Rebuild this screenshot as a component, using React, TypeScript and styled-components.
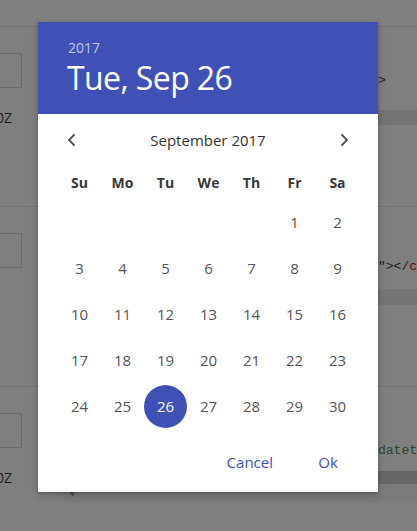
import React from "react";
import styled, { createGlobalStyle } from "styled-components";

const Global = createGlobalStyle`
  html, body { margin: 0; padding: 0; width: 417px; height: 531px; overflow: hidden; background: #fff; }
  #root { width: 417px; height: 531px; }
  * { box-sizing: border-box; }
`;

/* ---------- background page ---------- */

const Page = styled.div`
  position: relative;
  width: 417px;
  height: 531px;
  overflow: hidden;
  background: #fff;
  font-family: "Open Sans", "Noto Sans", sans-serif;
`;

const TopStrip = styled.div`
  height: 27px;
  border-bottom: 1px solid #e4e4e4;
`;

const Section = styled.section<{ $h: number }>`
  display: grid;
  grid-template-columns: 63px 1fr;
  height: ${(p) => p.$h}px;
  border-bottom: 1px solid #e4e4e4;
`;

const LeftCol = styled.div`
  display: flex;
  flex-direction: column;
  align-items: flex-end;
  padding-right: 41px;
  padding-top: 26px;
`;

const InputBox = styled.div`
  width: 160px;
  height: 35px;
  flex: none;
  border: 1px solid #d6d6d6;
  background: #fff;
`;

const Caption = styled.div`
  margin-top: 20px;
  margin-right: 10px;
  white-space: nowrap;
  font-size: 14px;
  line-height: 20px;
  color: #3e3e3e;
`;

const CodeCol = styled.div<{ $top: number }>`
  display: flex;
  flex-direction: column;
  padding-top: ${(p) => p.$top}px;
`;

const CodeLine = styled.div`
  padding-left: 315px;
  font-family: "Liberation Mono", monospace;
  font-size: 13px;
  line-height: 18px;
  white-space: nowrap;
  color: #444;
`;

const Tok = styled.span<{ $c: string }>`
  color: ${(p) => p.$c};
`;

const ScrollBand = styled.div<{ $gap: number; $h: number }>`
  margin-top: ${(p) => p.$gap}px;
  height: ${(p) => p.$h}px;
  background: #eaeaea;
`;

const Thumb = styled.div`
  margin-top: 11px;
  margin-left: 17px;
  height: 13px;
  background: #cdcdcd;
`;

const Track = styled.div`
  height: 18px;
  background: #f6f6f6;
  display: flex;
  align-items: center;
  padding-left: 6px;
`;

/* ---------- overlay & dialog ---------- */

const Backdrop = styled.div`
  position: absolute;
  inset: 0;
  background: rgba(0, 0, 0, 0.5);
  display: flex;
  justify-content: flex-start;
  align-items: flex-start;
  padding: 22px 0 0 38px;
`;

const Dialog = styled.div`
  width: 340px;
  background: #fff;
  box-shadow: 0 3px 8px rgba(0, 0, 0, 0.2), 0 1px 3px rgba(0, 0, 0, 0.18);
  font-family: "Open Sans", "Noto Sans", sans-serif;
  display: flex;
  flex-direction: column;
`;

const Header = styled.header`
  height: 92px;
  background: #3f51b5;
  padding: 16px 30px 0;
  display: flex;
  flex-direction: column;
`;

const Year = styled.div`
  font-size: 14px;
  line-height: 20px;
  color: rgba(255, 255, 255, 0.7);
`;

const DateTitle = styled.div`
  font-size: 32px;
  line-height: 40px;
  color: #fff;
  letter-spacing: -0.6px;
  margin-left: -1px;
`;

const NavRow = styled.div`
  height: 52px;
  padding: 0 14px;
  display: flex;
  align-items: center;
  justify-content: space-between;
`;

const NavButton = styled.button`
  width: 40px;
  height: 40px;
  border: 0;
  background: transparent;
  padding: 0;
  display: flex;
  align-items: center;
  justify-content: center;
  cursor: pointer;
`;

const MonthTitle = styled.div`
  font-size: 15px;
  line-height: 20px;
  color: #333;
`;

const Grid = styled.div`
  padding: 0 20px;
  display: grid;
  grid-template-columns: repeat(7, 1fr);
`;

const WeekDay = styled.div`
  height: 33px;
  display: flex;
  align-items: center;
  justify-content: center;
  font-size: 14px;
  font-weight: 700;
  color: #383838;
`;

const Cell = styled.div`
  height: 46px;
  display: flex;
  align-items: center;
  justify-content: center;
`;

const Day = styled.button<{ $selected?: boolean }>`
  width: 43px;
  height: 43px;
  border: 0;
  border-radius: 50%;
  padding: 0;
  font-family: inherit;
  font-size: 15px;
  color: ${(p) => (p.$selected ? "#fff" : "#555")};
  background: ${(p) => (p.$selected ? "#3f51b5" : "transparent")};
  cursor: pointer;
`;

const Actions = styled.div`
  display: flex;
  justify-content: flex-end;
  gap: 7px;
  padding: 15px 18px 12px;
`;

const TextButton = styled.button`
  min-width: 64px;
  height: 36px;
  padding: 0 16px;
  border: 0;
  background: transparent;
  font-family: inherit;
  font-size: 15px;
  color: #3f51b5;
  cursor: pointer;
`;

const Chevron = ({ dir }: { dir: "left" | "right" }) => (
  <svg width="10" height="14" viewBox="0 0 10 14" fill="none">
    <path
      d={dir === "left" ? "M7.5 1.5 L2 7 L7.5 12.5" : "M2.5 1.5 L8 7 L2.5 12.5"}
      stroke="#4a4a4a"
      strokeWidth="1.8"
    />
  </svg>
);

const LeftArrow = () => (
  <svg width="5" height="8" viewBox="0 0 5 8">
    <path d="M5 0 L0 4 L5 8 Z" fill="#a0a0a0" />
  </svg>
);

const weekdays = ["Su", "Mo", "Tu", "We", "Th", "Fr", "Sa"];
const SELECTED = 26;

export default function App() {
  const cells: (number | null)[] = [];
  for (let i = 0; i < 5; i++) cells.push(null);
  for (let d = 1; d <= 30; d++) cells.push(d);

  return (
    <>
      <Global />
      <Page>
        <TopStrip />
        <Section $h={180}>
          <LeftCol>
            <InputBox />
            <Caption>2017-09-26T00:00:00.000Z</Caption>
          </LeftCol>
          <CodeCol $top={45}>
            <CodeLine>&gt;</CodeLine>
            <ScrollBand $gap={20} $h={15} />
          </CodeCol>
        </Section>
        <Section $h={180}>
          <LeftCol>
            <InputBox />
          </LeftCol>
          <CodeCol $top={51}>
            <CodeLine>
              "&gt;&lt;/<Tok $c="#b02020">c</Tok>
            </CodeLine>
            <ScrollBand $gap={13} $h={16} />
          </CodeCol>
        </Section>
        <Section $h={150}>
          <LeftCol>
            <InputBox />
            <Caption>2017-09-26T00:00:00.000Z</Caption>
          </LeftCol>
          <CodeCol $top={55}>
            <CodeLine>
              <Tok $c="#5a8a5a">datetime</Tok>
            </CodeLine>
            <Thumb />
            <Track>
              <LeftArrow />
            </Track>
          </CodeCol>
        </Section>

        <Backdrop>
          <Dialog>
            <Header>
              <Year>2017</Year>
              <DateTitle>Tue, Sep 26</DateTitle>
            </Header>
            <NavRow>
              <NavButton aria-label="Previous month">
                <Chevron dir="left" />
              </NavButton>
              <MonthTitle>September 2017</MonthTitle>
              <NavButton aria-label="Next month">
                <Chevron dir="right" />
              </NavButton>
            </NavRow>
            <Grid>
              {weekdays.map((w) => (
                <WeekDay key={w}>{w}</WeekDay>
              ))}
              {cells.map((d, i) => (
                <Cell key={i}>
                  {d !== null && <Day $selected={d === SELECTED}>{d}</Day>}
                </Cell>
              ))}
            </Grid>
            <Actions>
              <TextButton>Cancel</TextButton>
              <TextButton>Ok</TextButton>
            </Actions>
          </Dialog>
        </Backdrop>
      </Page>
    </>
  );
}
